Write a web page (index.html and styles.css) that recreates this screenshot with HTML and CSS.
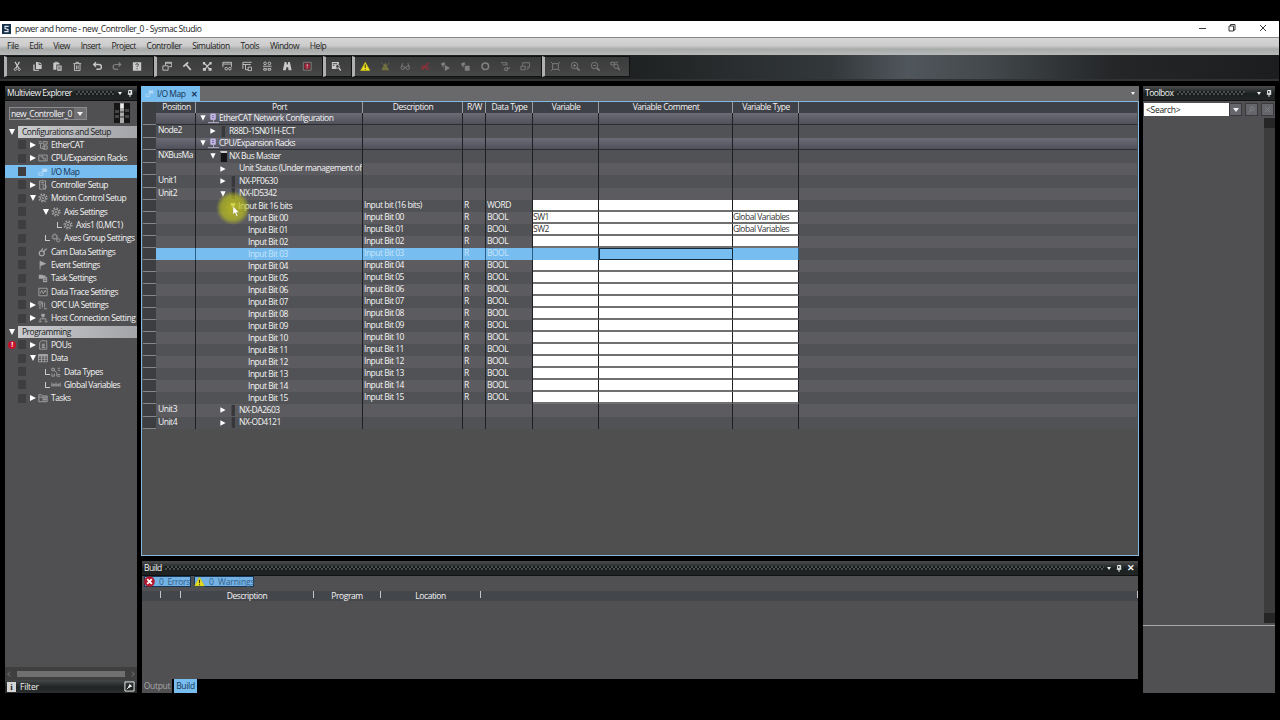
FILE: index.html
```html
<!DOCTYPE html>
<html lang="en">
<head>
    <meta charset="UTF-8">
    <meta name="viewport" content="width=device-width, initial-scale=1.0">
    <title>power and home - new_Controller_0 - Sysmac Studio</title>
    <link rel="stylesheet" href="styles.css">
</head>
<body>
    <!-- Icon sprite -->
    <svg class="sprite" viewBox="0 0 12 12">
        <symbol id="cut" viewBox="0 0 12 12"><path d="M3.5 1l4 7M8.5 1l-4 7" stroke-width="1.4"/><circle cx="3.8" cy="9.5" r="1.3"/><circle cx="8.2" cy="9.5" r="1.3"/></symbol>
        <symbol id="copy" viewBox="0 0 12 12"><path class="fill" d="M4.500 1h4l2.500 2.500V9H4.500z"/><path d="M1.500 4v7H8V10H3V4z" class="fill"/><path d="M8 1v3h2.500" stroke="#444"/></symbol>
        <symbol id="paste" viewBox="0 0 12 12"><path class="fill" d="M1.500 2h7v2H5v6H1.500z"/><path class="fill" d="M6 5h5v6H6z"/><path d="M3 1.500h4"/><path d="M7 7h3M7 9h3" stroke="#444"/></symbol>
        <symbol id="trash" viewBox="0 0 12 12"><path d="M1.500 3h9M4.500 3V1.500h3V3M2.800 3v8h6.400V3M5 5v4.500M7 5v4.500"/></symbol>
        <symbol id="undo" viewBox="0 0 12 12"><path d="M2 4h6a2.500 2.500 0 0 1 0 5.500H5M4.500 1.500L2 4l2.500 2.500" stroke-width="1.600"/></symbol>
        <symbol id="redo" viewBox="0 0 12 12"><path d="M10 4H4a2.500 2.500 0 0 0 0 5.500h3M7.500 1.500L10 4 7.500 6.500" stroke-width="1.400"/></symbol>
        <symbol id="help" viewBox="0 0 12 12"><path class="fill" d="M1 1.500h9.500v9.500H1z"/><path d="M4.300 4.500c0-2 3-2 3 0 0 1.200-1.500 1-1.500 2.500M5.800 8.200v1.300" stroke="#333"/></symbol>
        <symbol id="windows" viewBox="0 0 12 12"><path d="M4 1.500h7v5H8M1 5.500h6v5H1zM4 5V1.500M4 2.500h7"/></symbol>
        <symbol id="hammer" viewBox="0 0 12 12"><path d="M1.500 6.500L7 1.500M5 4.300l5 6" stroke-width="2"/></symbol>
        <symbol id="network" viewBox="0 0 12 12"><path d="M2 2l4 4 4-4M3 10l3-4 3 4" stroke-width="1.300"/><path class="fill" d="M1 1h2.500v3H1zM8.500 1H11v3H8.500zM1 8h3.500v3H1zM7.500 8H11v3H7.500z"/></symbol>
        <symbol id="watch" viewBox="0 0 12 12"><path d="M1 7V1.500h10V7M1 3.500h10"/><circle cx="4.800" cy="8.800" r="1.500"/><circle cx="9" cy="8.800" r="1.500"/></symbol>
        <symbol id="list" viewBox="0 0 12 12"><path d="M1 9V1.500h10M1 4h9M4 4v6h3M7 7h4v4H7z"/></symbol>
        <symbol id="xref" viewBox="0 0 12 12"><circle cx="3.500" cy="2.700" r="1.500"/><circle cx="8.500" cy="2.700" r="1.500"/><path d="M1 6h10M2 8.500h3v2H2zM7 8.500h3v2H7z"/></symbol>
        <symbol id="binoculars" viewBox="0 0 12 12"><path class="fill" d="M3 1h2l.5 3h1L7 1h2l2 9.500H7.500L7 7H5l-.5 3.500H1z"/></symbol>
        <symbol id="alert" viewBox="0 0 12 12"><path d="M1.500 1.500h9v9h-9z" fill="#4b3034" stroke="#858585"/><circle cx="6" cy="6" r="3.300" fill="#9c2438" stroke="none"/><path d="M6 3.500v3M6 7.500v1" stroke="#ccc"/></symbol>
        <symbol id="inspect" viewBox="0 0 12 12"><path class="fill" d="M1 1h8v3H6v5H1z"/><circle cx="7.200" cy="6.200" r="2.200"/><path d="M9 8l2.300 2.800" stroke-width="1.600"/><path d="M2 3h5M2 5h2" stroke="#444"/></symbol>
        <symbol id="warn" viewBox="0 0 12 12"><path d="M6 1l5.500 10H.5z" fill="#e8dd22" stroke="#b5aa18" stroke-width=".5"/><path d="M6 4v4M6 9v1" stroke="#3c3a10" stroke-width="1.200"/></symbol>
        <symbol id="warnoff" viewBox="0 0 12 12"><path d="M6 2l4.500 8.500h-9z" fill="#77753c" stroke="none"/><path d="M1.500 2l9 8.500M10.500 2L4 10" stroke="#68684e"/></symbol>
        <symbol id="glasses" viewBox="0 0 12 12"><circle cx="3.200" cy="7.800" r="2"/><circle cx="8.800" cy="7.800" r="2"/><path d="M5 7.500h2M1.500 7L3 2.500M10.500 7L9 2.500"/></symbol>
        <symbol id="glassesoff" viewBox="0 0 12 12"><circle cx="3.200" cy="7.800" r="2" stroke="#7c3840"/><circle cx="8.800" cy="7.800" r="2" stroke="#7c3840"/><path d="M2 9.500l8-7.500M3 5l6 4" stroke="#8c3038" stroke-width="1.500"/></symbol>
        <symbol id="run" viewBox="0 0 12 12"><path d="M1 3l4-2 1 3-2 1v3z" class="fill"/><path d="M5.500 4.500l6 3.500-6 3.500z" class="fill"/></symbol>
        <symbol id="stop" viewBox="0 0 12 12"><path d="M1 3l4-2 1 3-2 1v3z" class="fill"/><path d="M5.500 5.500H11V11H5.500z" class="fill"/></symbol>
        <symbol id="ring" viewBox="0 0 12 12"><circle cx="6" cy="6" r="3.800" stroke-width="1.800"/></symbol>
        <symbol id="step" viewBox="0 0 12 12"><path d="M1 2h7v3M3 4.500h5M8 7l2 2 1-2M5.500 8h3v3h-3z"/></symbol>
        <symbol id="stepout" viewBox="0 0 12 12"><path d="M3 2h8v5H8M1 6h5v4H1zM3 2v3M8 10l2-2"/></symbol>
        <symbol id="fit" viewBox="0 0 12 12"><path d="M3 3h6.500v6.500H3zM1 1l2 2M11.500 1l-2 2M1 11.500l2-2M11.500 11.500l-2-2"/></symbol>
        <symbol id="zoomin" viewBox="0 0 12 12"><circle cx="5.200" cy="5.200" r="3.700"/><path d="M8 8l3 3" stroke-width="1.800"/><path d="M3.500 5.200H7M5.200 3.500V7"/></symbol>
        <symbol id="zoomout" viewBox="0 0 12 12"><circle cx="5.200" cy="5.200" r="3.700"/><path d="M8 8l3 3" stroke-width="1.800"/><path d="M3.500 5.200H7"/></symbol>
        <symbol id="zoom100" viewBox="0 0 12 12"><path d="M1 1.500h4v3H1zM6 1.500h3"/><circle cx="7" cy="6" r="2.500"/><path d="M9 8l2 2.500" stroke-width="1.500"/></symbol>
        <symbol id="pin" viewBox="0 0 12 12"><path d="M4 1.500h4.500v5H4zM7.500 1.500v5M2.500 7h7M6 7v4" stroke-width="1.500"/></symbol>
        <symbol id="ethercat" viewBox="0 0 12 12"><path d="M1 2h3M1 4h4M6 2h5v3H6zM3 5v5h3M6 7h5v4H6zM8 7v4"/></symbol>
        <symbol id="rack" viewBox="0 0 12 12"><path d="M1 2.500h10v7H1zM3 4.500h3v2.500h2M8 5.500l1.500 1.500L8 8.500"/></symbol>
        <symbol id="iomap" viewBox="0 0 12 12"><path class="fill" d="M5 2h6v4H5z"/><path d="M1 7h5v3H1z"/></symbol>
        <symbol id="setup" viewBox="0 0 12 12"><path d="M2 1h7v10H2zM4 3h3M4 5h3"/><circle cx="8" cy="8" r="2"/></symbol>
        <symbol id="gear" viewBox="0 0 12 12"><circle cx="6" cy="6" r="3.200"/><circle cx="6" cy="6" r="4.700" stroke-dasharray="1.850 1.850" stroke-width="1.500"/><circle cx="6" cy="6" r="1"/></symbol>
        <symbol id="gears" viewBox="0 0 12 12"><circle cx="4.500" cy="4.500" r="2.500"/><circle cx="4.500" cy="4.500" r="3.500" stroke-dasharray="1.300 1.400"/><circle cx="8.700" cy="8.700" r="2"/></symbol>
        <symbol id="cam" viewBox="0 0 12 12"><circle cx="4.500" cy="7.500" r="3" stroke-width="1.500"/><path d="M4 4L6 1.500M6 6l4.500-4" stroke-width="1.300"/></symbol>
        <symbol id="flag" viewBox="0 0 12 12"><path class="fill" d="M2.500 1l7.500 3.500-7.500 3z"/><path d="M2.500 1v10.500"/></symbol>
        <symbol id="task" viewBox="0 0 12 12"><path class="fill" d="M1 2h4l1 1h3v4H1z"/><path class="fill" d="M6 5h5v6H6z"/><path d="M7 7h3M7 9h3" stroke="#555"/></symbol>
        <symbol id="trace" viewBox="0 0 12 12"><path d="M1 1.500h10v9H1zM2.500 8l2-4 2 4 2-4 1 2"/></symbol>
        <symbol id="opc" viewBox="0 0 12 12"><path d="M1 2h3v3H1zM5.500 2v7M8 3v6M1 7h3M1 9.500h3M7 10.500h4"/></symbol>
        <symbol id="host" viewBox="0 0 12 12"><path class="fill" d="M4 1h4v3.500H4z"/><path d="M6 4v3M2.500 10V7h7v3M1 10.500h3.500M8 10.500h3.500"/></symbol>
        <symbol id="pou" viewBox="0 0 12 12"><path d="M4 1h6.500v10H2V3.500zM4.500 5h4M4.500 7h4M4.500 9h4M6 5v4"/></symbol>
        <symbol id="grid" viewBox="0 0 12 12"><path d="M.500 2h11v8.500H.5zM.5 4.800h11M.5 7.600h11M4.200 2v8.500M8 2v8.500"/><path class="fill" d="M.500 1.500h11v2H.5z"/></symbol>
        <symbol id="types" viewBox="0 0 12 12"><path d="M1 1.500h3v3H1zM8 1.500h3M8 4h3M4 4l3 3M1 8v3h3V8M7 7v4h4M8 9h3"/></symbol>
        <symbol id="vars" viewBox="0 0 12 12"><path d="M1 3v5M3.500 4v4M6 3v5M8.500 4v4M11 3v5M1 6h10"/></symbol>
        <symbol id="tasks" viewBox="0 0 12 12"><path d="M1 2h3l1 1.500h6v7H1zM1 5h10M6 5v5M8.500 5v5M6 7.500h5"/></symbol>
        <symbol id="node" viewBox="0 0 12 12"><path d="M3 1h5v6H3z" fill="#c6bbe6" stroke="#b9aedb"/><path d="M4.500 3h2M4.500 5h2" stroke="#6a5c93"/><path d="M6 7v3M0 10.500h12" stroke="#b9b4cf"/></symbol>
    </svg>

    <header class="titlebar">
        <span class="app-icon"><svg class="icon" viewBox="0 0 12 12"><path d="M9 2.500H4v3l4 1v3H3" stroke-width="1.500"/></svg></span>
        <span class="app-title">power and home - new_Controller_0 - Sysmac Studio</span>
        <svg class="window-buttons" viewBox="0 0 70 12"><path d="M2 6.500h7M32 4h4.500v5H32zM33.500 4V2.500H38V8h-1.500M63 3l6 6M69 3l-6 6"/></svg>
    </header>

    <nav class="menubar">
        <span>File</span><span>Edit</span><span>View</span><span>Insert</span><span>Project</span><span>Controller</span><span>Simulation</span><span>Tools</span><span>Window</span><span>Help</span>
    </nav>

    <div class="toolbar" id="toolbar"></div>

    <main class="workspace">
        <aside class="panel explorer">
            <div class="panel-head">
                <span>Multiview Explorer</span><i class="dots"></i><i class="caret"></i><svg class="icon pin"><use href="#pin"/></svg>
            </div>
            <div class="controller-row">
                <div class="select"><span>new_Controller_0</span><b><i class="caret"></i></b></div>
                <svg class="device" viewBox="0 0 16 20"><path d="M0 0h16v20H0z" fill="#161616"/><path d="M6 0h4v20H6z" fill="#aaa"/><path d="M6.500 1h3v4h-3z" fill="#eee"/><path d="M2 7v3M2 12v3M4 7v3M4 12v3M12 6v3M14 6v3M12 12v3M14 12v3" stroke="#777"/><path d="M6 9h4M6 14h4" stroke="#333"/></svg>
            </div>
            <div class="tree" id="tree"></div>
            <div class="hscroll"><i></i><b></b><i class="right"></i></div>
            <div class="filter"><span class="info">i</span><span>Filter</span><svg class="icon" viewBox="0 0 12 12"><path d="M1 1h10v10H1z"/><path class="fill" d="M6 3l3 3-2 .5L5 8 4 7l1.500-2z"/><path d="M3 9l2-2"/></svg></div>
        </aside>

        <section class="center">
            <div class="tabs">
                <div class="tab"><svg class="icon"><use href="#iomap"/></svg><span>I/O Map</span><b>✕</b></div>
                <i class="caret"></i>
            </div>
            <div class="document">
                <div class="io-table" id="ioTable"></div>
                <div class="click-spot">
                    <svg viewBox="0 0 10 14"><path d="M1 1v9.500l2.300-2 1.700 4 1.600-.7-1.700-3.800H8z" fill="#fff" stroke="#8b8a2a" stroke-width=".5"/></svg>
                </div>
            </div>

            <div class="build">
                <div class="panel-head">
                    <span>Build</span><i class="dots"></i><i class="caret"></i><svg class="icon pin"><use href="#pin"/></svg><b class="close">✕</b>
                </div>
                <div class="build-filters">
                    <span class="chip"><svg class="icon" viewBox="0 0 12 12"><circle cx="6" cy="6" r="5.800" fill="#b5182a" stroke="none"/><path d="M3.500 3.500l5 5M8.500 3.500l-5 5" stroke="#fff" stroke-width="2"/></svg>0&nbsp; Errors</span>
                    <span class="chip warnings"><svg class="icon"><use href="#warn"/></svg>0&nbsp; Warnings</span>
                </div>
                <div class="build-columns"><span></span><span></span><span>Description</span><span>Program</span><span>Location</span><span></span></div>
            </div>
            <div class="bottom-tabs"><span>Output</span><span class="active">Build</span></div>
        </section>

        <aside class="panel toolbox">
            <div class="panel-head">
                <span>Toolbox</span><i class="dots"></i><i class="caret"></i><svg class="icon pin"><use href="#pin"/></svg>
            </div>
            <div class="search">
                <span>&lt;Search&gt;</span><b class="drop"><i class="caret"></i></b>
                <b><svg class="icon" viewBox="0 0 12 12"><circle cx="7" cy="5" r="2.500"/><path d="M5 7l-3 3"/></svg></b>
                <b><svg class="icon" viewBox="0 0 12 12"><path d="M3 3l6 6M9 3l-6 6"/></svg></b>
            </div>
            <div class="toolbox-list"><div class="vscroll"><i></i><i></i></div></div>
            <div class="toolbox-info"></div>
        </aside>
    </main>

    <script src="app.js"></script>
</body>
</html>
```
FILE: styles.css
```css
* {
    box-sizing: border-box;
}
body {
    margin: 0;
    width: 1280px;
    height: 720px;
    padding: 21px 1px 0 0;
    overflow: hidden;
    background: #000;
    color: #f4f4f4;
    font-family: "Open Sans", "Noto Sans", sans-serif;
    font-size: 8.5px;
    letter-spacing: -.49px;
    line-height: 12px;
    white-space: nowrap;
}
.sprite {
    display: none;
}
.icon {
    width: 11px;
    height: 11px;
    flex: none;
    fill: none;
    stroke: currentColor;
    stroke-width: 1;
}
.fill {
    fill: currentColor;
    stroke: none;
}
.caret {
    border: 2.5px solid transparent;
    border-top: 3px solid #f0f0f0;
    border-bottom: 0;
    flex: none;
}

/* window chrome */
.titlebar {
    display: flex;
    align-items: center;
    height: 16px;
    background: #fff;
    color: #222;
}
.app-icon {
    width: 9px;
    height: 10px;
    margin: 0 4px 0 2px;
    background: #17304a;
    color: #dfe8ef;
    display: flex;
}
.app-icon .icon {
    width: 9px;
    height: 10px;
}
.app-title {
    letter-spacing: -.44px;
}
.window-buttons {
    width: 70px;
    height: 12px;
    margin-left: auto;
    margin-right: 12px;
    margin-bottom: 2px;
    fill: none;
    stroke: #222;
    stroke-width: .9;
}
.menubar {
    display: flex;
    height: 18px;
    padding: 1px 0 0 7px;
    gap: 10.8px;
    border-top: 1px solid #888;
    background: linear-gradient(#d6d6d6, #cccccc 45%, #a9abab 65%, #b8b9b9);
    color: #222;
    line-height: 14px;
}
.toolbar {
    display: flex;
    height: 26px;
    padding: 1px 0 2px 4px;
    border-bottom: 2px solid #303234;
    background: linear-gradient(90deg, #1d1f21 48%, #252829 54%, #33383b 65%, #50575c 71%, #43494c 77%, #242628 87%, #1c1d1f);
}
.tool-group {
    display: flex;
    align-items: center;
    border: 1px solid #111;
    border-left: 3px solid #b0b0b0;
    background: linear-gradient(#3a3b3c, #464646);
    color: #c9c9c9;
}
.tool {
    width: 20px;
    display: flex;
    justify-content: center;
}
.tool .icon {
    width: 10.5px;
    height: 10.5px;
}
.tool.off {
    color: #808080;
}
.workspace {
    display: grid;
    grid-template-columns: 132px 998px 132px;
    column-gap: 4px;
    height: 607px;
    margin: 5px 0 0 5px;
}

/* side panels */
.panel {
    display: flex;
    flex-direction: column;
    min-width: 0;
    background: #505052;
    overflow: hidden;
}
.panel-head {
    display: flex;
    align-items: center;
    flex: none;
    height: 15px;
    padding: 0 3px 0 2px;
    background: linear-gradient(#4b4c4d, #1b2020 55%, #202424);
    border-bottom: 1px solid #111;
}
.panel-head .dots {
    flex: 1;
    height: 4px;
    margin: 0 4px;
    background: repeating-conic-gradient(#4a4e50 0 25%, #161a1a 0 50%) 0 0 / 4px 4px;
}
.pin {
    width: 8px;
    height: 9px;
    margin-left: 4px;
}
.controller-row {
    display: flex;
    justify-content: space-between;
    flex: none;
    height: 24px;
    padding: 2px 7px 0 4px;
}
.select {
    display: flex;
    width: 78px;
    height: 13px;
    margin-top: 4px;
    border: 1px solid #8c8c8c;
    background: #55555a;
    line-height: 11px;
}
.select span {
    flex: 1;
    padding-left: 1px;
}
.select b {
    display: flex;
    align-items: center;
    padding: 0 3px;
    background: #707075;
}
.select .caret,
.search .caret {
    border-width: 4px 3px 0;
}
.device {
    width: 16px;
    height: 20px;
}
.tree {
    flex: 1;
    min-height: 0;
}
.tree-row {
    display: flex;
    align-items: center;
    height: 13.34px;
    padding-left: 13px;
    position: relative;
}
.tree-row .status {
    width: 8px;
    height: 9px;
    margin-right: 2px;
    flex: none;
    background: #3e3e40;
}
.tree-row .icon {
    width: 10px;
    height: 10px;
    margin-right: 3px;
    margin-left: -1px;
    color: #a8a8a8;
}
.arrow {
    display: flex;
    align-items: center;
    justify-content: center;
    width: 10px;
    flex: none;
    margin-right: 1px;
}
.arrow.open::before {
    content: "";
    border: 3.5px solid transparent;
    border-top: 6px solid #fff;
    border-bottom: 0;
}
.arrow.closed::before {
    content: "";
    border: 3.5px solid transparent;
    border-left: 6px solid #fff;
    border-right: 0;
}
.arrow.leaf::before {
    content: "";
    width: 4px;
    height: 5px;
    margin-left: 2px;
    border: solid #c8c8c8;
    border-width: 0 0 1px 1px;
}
.tree-row.indent-1 .arrow {
    margin-left: 13px;
}
.tree-row.indent-2 .arrow {
    margin-left: 25px;
}
.tree-row.section {
    padding-left: 2px;
    color: #1c1c1c;
}
.tree-row.section span {
    flex: 1;
    height: 12px;
    padding-left: 4px;
    background: linear-gradient(90deg, #c9cbce, #a2a4a7);
}
.tree-row.selected {
    background: #78bdf0;
    color: #173450;
}
.tree-row.selected .icon {
    color: #b9dcf5;
}
.error-mark {
    position: absolute;
    left: 3px;
    top: 3px;
    width: 8px;
    height: 8px;
    border-radius: 50%;
    background: #c8102c;
    color: #fff;
    font-size: 7px;
    font-weight: bold;
    line-height: 8px;
    text-align: center;
}
.hscroll {
    display: flex;
    align-items: center;
    height: 13px;
    padding: 0 3px;
    background: #3f3f3f;
}
.hscroll b {
    flex: 1;
    height: 6px;
    margin: 0 5px;
    background: #707070;
}
.hscroll i {
    width: 4px;
    height: 4px;
    border: solid #666;
    border-width: 0 0 1px 1px;
    transform: rotate(45deg);
}
.hscroll .right {
    transform: rotate(225deg);
}
.filter {
    display: flex;
    align-items: center;
    height: 13px;
    padding: 0 2px;
    background: linear-gradient(#454849, #202323 55%, #2b2e2e);
    letter-spacing: -.2px;
}
.filter .info {
    width: 9px;
    height: 10px;
    margin-right: 4px;
    background: #d5d5d5;
    color: #222;
    font: bold 9px/10px "Liberation Serif", serif;
    text-align: center;
}
.filter .icon {
    margin-left: auto;
}

/* document area */
.center {
    display: flex;
    flex-direction: column;
    min-width: 0;
}
.tabs {
    display: flex;
    justify-content: space-between;
    align-items: center;
    height: 15px;
    padding-right: 4px;
    background: #69696b;
}
.tab {
    display: flex;
    align-items: center;
    width: 59px;
    height: 15px;
    padding-left: 4px;
    background: #78bdf0;
    color: #173450;
}
.tab .icon {
    width: 9px;
    height: 9px;
    margin-right: 3px;
    color: #b5daf5;
}
.tab b {
    margin-left: auto;
    margin-right: 2px;
    font-size: 8px;
}
.document {
    position: relative;
    height: 455px;
    padding: 0 1px;
    border: 1px solid #86b8de;
    background: #4f4f50;
}
.io-row {
    display: grid;
    grid-template-columns: 13px 40px 167px 100px 23px 47px 66px 134px 66px 1fr;
    height: 12px;
    background: #505256;
    line-height: 10px;
}
.io-row.tall {
    height: 12.5px;
}
.io-row:nth-child(even) {
    background: #5c5c60;
}
.io-row > div {
    min-width: 0;
    padding-left: 1px;
    border-right: 1px solid #1d1f25;
    overflow: hidden;
}
.io-row > div:last-child {
    border-right: 0;
}
.io-row > .mark {
    background: #3d3e42;
    border-right: 0;
    border-bottom: 1px solid #85878a;
}
.io-row > .port {
    display: flex;
    align-items: center;
}
.port span {
    margin-top: -1px;
}
.io-row > .position {
    padding-left: 2px;
}
.io-row.header {
    height: 10.5px;
    background: #3e4147;
    text-align: center;
    letter-spacing: -.44px;
}
.io-row.header > div {
    border-color: #9a9ca0;
    line-height: 9px;
}
.io-row.header > .mark {
    border-bottom: 0;
}
.io-row.group {
    background: linear-gradient(#6c6b76, #4d4e57);
}
.io-row.group > div:not(.mark) {
    border-bottom: 1px solid #2b2d33;
}
.io-row > .edit {
    border-bottom: 2px solid #707070;
    background: #fff;
    color: #333;
    padding-left: 0;
}
.io-row.selected {
    background: linear-gradient(90deg, #78bdf0 656px, #505256 656px);
    color: #c5e4fa;
}
.io-row.selected > div {
    border-right-color: #2a5f88;
}
.io-row.selected > .focused {
    border: 1px solid #10273c;
}
.port .arrow {
    width: 9px;
    margin-right: 1px;
}
.port .arrow::before {
    transform: scale(.88);
}
.port .unit {
    width: 4px;
    height: 11px;
    margin: 0 4px 0 3px;
    background: #38383c;
    border-left: 1px solid #4a4a4a;
}
.port .unit.blank {
    visibility: hidden;
}
.port .unit.master {
    width: 7px;
    margin: 0 2px 0 2px;
    background: #151517;
    border-top: 2px solid #ccc;
}
.io-row > .level-0 { padding-left: 2px; }
.io-row > .level-1 { padding-left: 12px; }
.io-row > .level-2 { padding-left: 22px; }
.io-row > .level-3 { padding-left: 32px; }
.io-row > .level-4 { padding-left: 52px; }
.click-spot {
    position: absolute;
    left: 74px;
    top: 89px;
    width: 34px;
    height: 34px;
    border-radius: 50%;
    background: radial-gradient(rgba(205, 205, 25, .8), rgba(185, 190, 30, .66) 50%, rgba(170, 175, 40, 0) 71%);
}
.click-spot svg {
    position: absolute;
    left: 16px;
    top: 14px;
    width: 9px;
    height: 13px;
}

/* build output */
.build {
    height: 118px;
    margin: 5px 1px 0;
    background: #505052;
}
.build .close {
    margin-left: 4px;
    font-size: 9px;
}
.build .dots {
    margin: 0 3px;
}
.build-filters {
    display: flex;
    gap: 3px;
    padding: 0 0 0 2px;
    height: 15px;
}
.chip {
    display: flex;
    align-items: center;
    width: 47px;
    height: 11px;
    border: 1px solid #183655;
    background: #73b2e4;
    color: #365f88;
    letter-spacing: -.3px;
}
.chip .icon {
    margin: 0 4px 0 -1px;
}
.chip.warnings {
    width: 60px;
    letter-spacing: -.1px;
}
.build-columns {
    display: grid;
    grid-template-columns: 19px 20px 133px 67px 100px 1fr;
    height: 10px;
    background: #43464b;
    line-height: 9px;
    text-align: center;
    letter-spacing: -.44px;
}
.build-columns span {
    height: 7px;
    border-right: 1px solid #c5c5c5;
}
.bottom-tabs {
    display: flex;
    gap: 2px;
    height: 14px;
    padding-left: 1px;
    line-height: 14px;
    text-align: center;
}
.bottom-tabs span {
    width: 30px;
    background: #505052;
    color: #a5a5a5;
    letter-spacing: -.3px;
}
.bottom-tabs .active {
    width: 23px;
    background: #78bdf0;
    color: #173450;
}

/* toolbox */
.toolbox .panel-head {
    padding-right: 2px;
}
.toolbox .dots {
    margin-right: 12px;
}
.search {
    display: flex;
    gap: 3px;
    height: 17px;
    padding: 2px 1px 2px 1px;
}
.search span {
    width: 85px;
    padding-left: 2px;
    background: #fff;
    color: #222;
    line-height: 13px;
    letter-spacing: -.3px;
}
.search b {
    display: flex;
    align-items: center;
    justify-content: center;
    width: 13px;
    border: 1px solid #39393e;
    background: #65656c;
    color: #88888e;
}
.search .drop {
    margin-left: -3px;
}
.search b .icon {
    width: 9px;
    height: 9px;
}
.toolbox-list {
    display: flex;
    justify-content: flex-end;
    height: 507px;
    padding-bottom: 2px;
}
.vscroll {
    display: flex;
    flex-direction: column;
    justify-content: space-between;
    width: 11px;
    background: #3c3c3d;
}
.vscroll i {
    height: 10px;
    background: #262626;
}
.toolbox-info {
    flex: 1;
    border-top: 1px solid #a8a8a8;
}
```
FILE: app.js
```js
const icon = name => `<svg class="icon"><use href="#${name}"/></svg>`;

// Toolbar groups: width and icons, "-" in front means disabled
const toolGroups = [
    [150, ['cut', 'copy', 'paste', 'trash', 'undo', '-redo', 'help']],
    [169, ['windows', 'hammer', 'network', 'watch', 'list', 'xref', 'binoculars', 'alert']],
    [29, ['inspect']],
    [190, ['warn', '-warnoff', '-glasses', '-glassesoff', '-run', '-stop', '-ring', '-step', '-stepout']],
    [88, ['-fit', '-zoomin', '-zoomout', '-zoom100']]
];

document.getElementById('toolbar').innerHTML = toolGroups.map(([width, tools]) => `
    <div class="tool-group" style="width: ${width}px">
        ${tools.map(t => `<span class="tool ${t[0] === '-' ? 'off' : ''}">${icon(t.replace('-', ''))}</span>`).join('')}
    </div>`).join('');

// Explorer tree: [indent, arrow, icon, label, flag]
const tree = [
    ['section', 'open', '', 'Configurations and Setup'],
    [0, 'closed', 'ethercat', 'EtherCAT'],
    [0, 'closed', 'rack', 'CPU/Expansion Racks'],
    [0, '', 'iomap', 'I/O Map', 'selected'],
    [0, 'closed', 'setup', 'Controller Setup'],
    [0, 'open', 'gear', 'Motion Control Setup'],
    [1, 'open', 'gear', 'Axis Settings'],
    [2, 'leaf', 'gear', 'Axis1 (0,MC1)'],
    [1, 'leaf', 'gears', 'Axes Group Settings'],
    [0, '', 'cam', 'Cam Data Settings'],
    [0, '', 'flag', 'Event Settings'],
    [0, '', 'task', 'Task Settings'],
    [0, '', 'trace', 'Data Trace Settings'],
    [0, 'closed', 'opc', 'OPC UA Settings'],
    [0, 'closed', 'host', 'Host Connection Setting'],
    ['section', 'open', '', 'Programming'],
    [0, 'closed', 'pou', 'POUs', 'error'],
    [0, 'open', 'grid', 'Data'],
    [1, 'leaf', 'types', 'Data Types'],
    [1, 'leaf', 'vars', 'Global Variables'],
    [0, 'closed', 'tasks', 'Tasks']
];

document.getElementById('tree').innerHTML = tree.map(([indent, arrow, image, label, flag]) => {
    if (indent === 'section') {
        return `<div class="tree-row section"><i class="arrow ${arrow}"></i><span>${label}</span></div>`;
    }
    return `<div class="tree-row indent-${indent} ${flag || ''}">
        ${flag === 'error' ? '<b class="error-mark">!</b>' : ''}
        <i class="status"></i><i class="arrow ${arrow}"></i>${icon(image)}<span>${label}</span>
    </div>`;
}).join('');

// I/O map
function ioRow(cls, position, port, cells = [], edit = []) {
    let html = `<div class="io-row ${cls}"><div class="mark"></div><div class="position">${position}</div>${port}`;
    for (let i = 0; i < 3; i++) {
        html += `<div>${cells[i] || ''}</div>`;
    }
    for (let i = 0; i < 3; i++) {
        const editable = edit[i] !== undefined && cls !== 'header';
        html += `<div class="${editable ? 'edit' : ''} ${cls === 'selected' && i === 1 ? 'focused' : ''}">${edit[i] || ''}</div>`;
    }
    return html + '<div></div></div>';
}

function port(level, arrow, image, label) {
    return `<div class="port level-${level}">${arrow ? `<i class="arrow ${arrow}"></i>` : ''}${image}<span>${label}</span></div>`;
}

const unit = '<i class="unit"></i>';
const variables = { 0: 'SW1', 1: 'SW2' };

let rows = ioRow('header', 'Position', '<div>Port</div>', ['Description', 'R/W', 'Data Type'], ['Variable', 'Variable Comment', 'Variable Type']);
rows += ioRow('tall group', '', port(0, 'open', icon('node'), 'EtherCAT Network Configuration'));
rows += ioRow('tall', 'Node2', port(1, 'closed', unit, 'R88D-1SN01H-ECT'));
rows += ioRow('tall group', '', port(0, 'open', icon('node'), 'CPU/Expansion Racks'));
rows += ioRow('tall', 'NXBusMa', port(1, 'open', '<i class="unit master"></i>', 'NX Bus Master'));
rows += ioRow('tall', '', port(2, 'closed', '<i class="unit blank"></i>', 'Unit Status (Under management of'));
rows += ioRow('tall', 'Unit1', port(2, 'closed', unit, 'NX-PF0630'));
rows += ioRow('tall', 'Unit2', port(2, 'open', unit, 'NX-ID5342'));
rows += ioRow('', '', port(3, 'open', '', 'Input Bit 16 bits'), ['Input bit (16 bits)', 'R', 'WORD'], ['', '', '']);
for (let bit = 0; bit < 16; bit++) {
    const name = 'Input Bit ' + String(bit).padStart(2, '0');
    const variable = variables[bit];
    const edit = bit === 3 ? [] : [variable || '', '', variable ? 'Global Variables' : ''];
    rows += ioRow(bit === 3 ? 'selected' : '', '', port(4, '', '', name), [name, 'R', 'BOOL'], edit);
}
rows += ioRow('tall', 'Unit3', port(2, 'closed', unit, 'NX-DA2603'));
rows += ioRow('tall', 'Unit4', port(2, 'closed', unit, 'NX-OD4121'));
document.getElementById('ioTable').innerHTML = rows;
```
